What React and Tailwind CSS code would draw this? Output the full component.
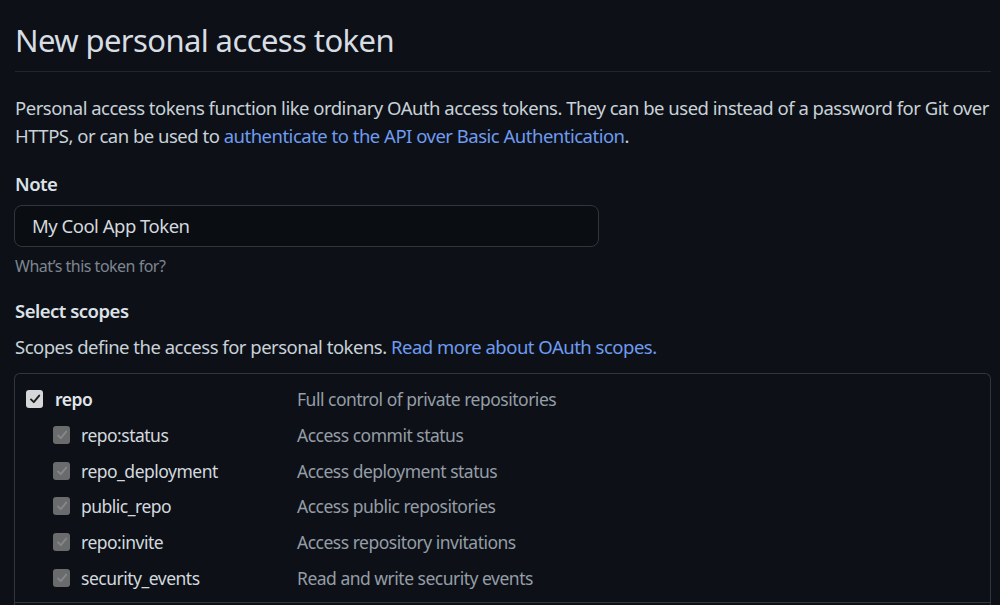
import React from 'react';

const scopes = [
  { name: 'repo:status', desc: 'Access commit status' },
  { name: 'repo_deployment', desc: 'Access deployment status' },
  { name: 'public_repo', desc: 'Access public repositories' },
  { name: 'repo:invite', desc: 'Access repository invitations' },
  { name: 'security_events', desc: 'Read and write security events' },
];

function Check({ disabled }) {
  return (
    <span
      className={
        'flex items-center justify-center w-[17px] h-[18px] rounded-[3px] shrink-0 ' +
        (disabled ? 'bg-[#6a6b6d]' : 'bg-[#d6d7d9]')
      }
    >
      <svg width="12" height="12" viewBox="0 0 12 12" fill="none">
        <path
          d="M2 6.4 L4.8 9.2 L10.2 2.6"
          stroke={disabled ? '#85878a' : '#1b1d21'}
          strokeWidth="1.9"
          strokeLinecap="round"
          strokeLinejoin="round"
        />
      </svg>
    </span>
  );
}

export default function App() {
  return (
    <div
      className="min-h-[605px] bg-[#0d1117] text-[#c9d1d9] pl-[15px] pr-[9px] overflow-hidden tracking-[-0.5px]"
      style={{ fontFamily: '"Noto Sans", "Open Sans", sans-serif' }}
    >
      <div className="pt-[20px] pb-[10px] border-b border-[#21262d]">
        <h2 className="text-[31px] leading-[41px] font-normal tracking-[-0.6px] text-[#d7dde3]">New personal access token</h2>
      </div>

      <p className="mt-[22px] text-[18.5px] leading-[28px] whitespace-nowrap">
        Personal access tokens function like ordinary OAuth access tokens. They can be used instead of a password for Git over
        <br />
        HTTPS, or can be used to <a className="text-[#6f9bf0]">authenticate to the API over Basic Authentication</a>.
      </p>

      <div className="mt-[20px] text-[18.5px] leading-[28px] font-semibold text-[#dce2e8]">Note</div>
      <div className="mt-[7px] w-[585px] h-[42px] ml-[-1px] rounded-[8px] border border-[#30363d] bg-[#0a0d12] flex items-center pl-[17px] text-[18.5px] text-[#d3d9df]">
        My Cool App Token
      </div>
      <div className="mt-[7px] text-[16px] leading-[24px] text-[#7d8590]">What’s this token for?</div>

      <div className="mt-[19px] text-[18.5px] leading-[28px] font-semibold text-[#dce2e8]">Select scopes</div>
      <p className="mt-[8px] text-[18.5px] leading-[28px]">
        Scopes define the access for personal tokens. <a className="text-[#6f9bf0]">Read more about OAuth scopes.</a>
      </p>

      <div className="mt-[12px] ml-[-1px] w-[977px] rounded-t-[6px] border border-[#30363d] border-b-0 h-[260px]">
        <div className="pt-[7px] text-[17.5px]">
          <div className="flex items-center h-[36px]">
            <div className="w-[282px] flex items-center pl-[11px] gap-[12px]">
              <Check />
              <span className="font-semibold text-[#e1e6eb]">repo</span>
            </div>
            <span className="text-[#959da6]">Full control of private repositories</span>
          </div>
          {scopes.map((s) => (
            <div key={s.name} className="flex items-center h-[35.75px]">
              <div className="w-[282px] flex items-center pl-[38px] gap-[11px]">
                <Check disabled />
                <span className="text-[#d3d9df]">{s.name}</span>
              </div>
              <span className="text-[#959da6]">{s.desc}</span>
            </div>
          ))}
        </div>
        <div className="mt-[6px] border-t border-[#30363d]" />
      </div>
    </div>
  );
}
